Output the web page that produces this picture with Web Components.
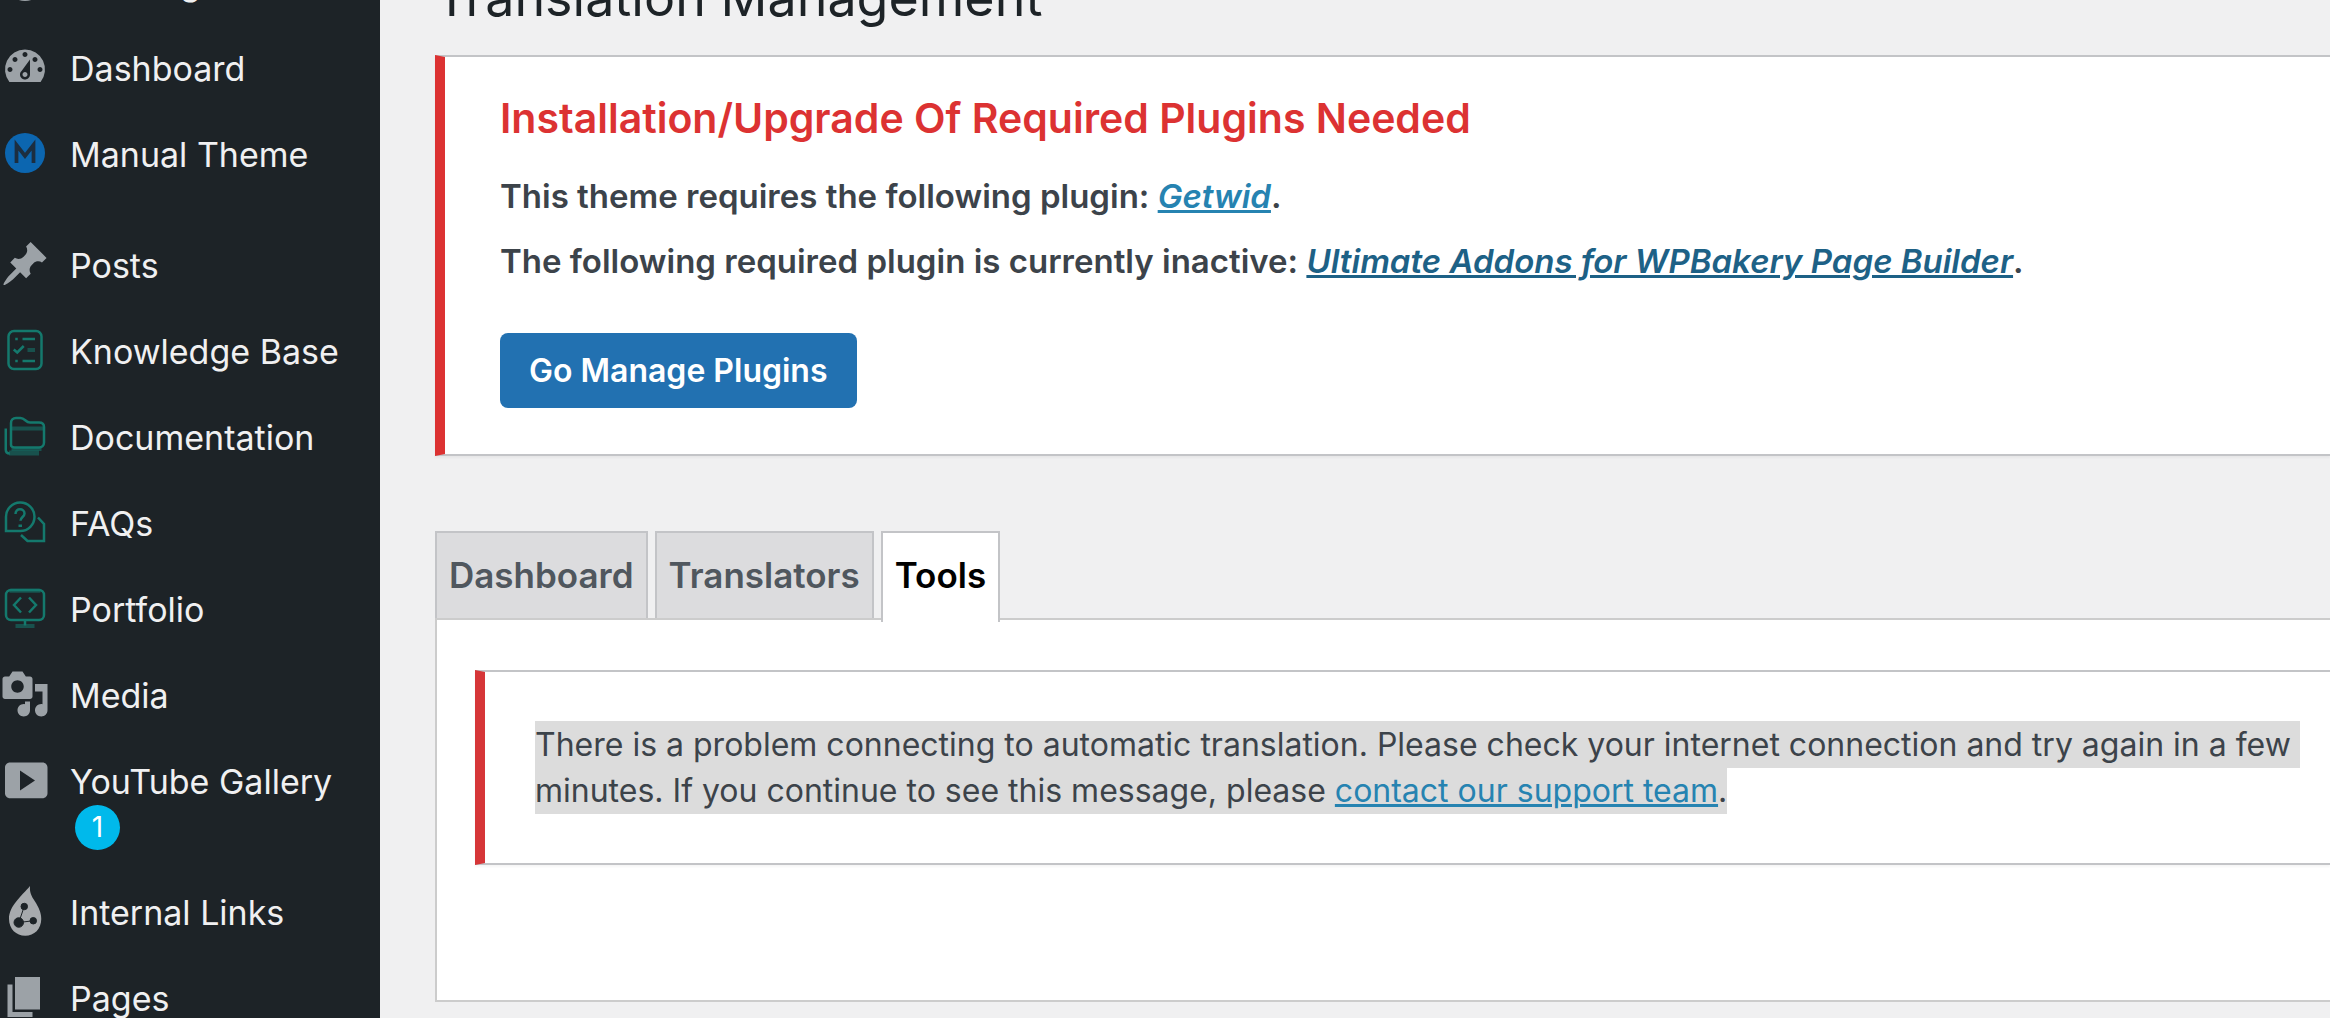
<!DOCTYPE html>
<html lang="en">
<head>
<meta charset="utf-8">
<title>Translation Management</title>
<style>
  body {
    margin: 0;
    background: #f0f0f1;
    font-family: Inter, "Liberation Sans", sans-serif;
    color: #3c434a;
  }
  a {
    color: #2683b1;
    text-decoration-thickness: 3px;
  }
  a.visited {
    color: #1d6186;
  }
</style>
</head>
<body>
<wp-admin>
  <admin-menu slot="menu">
    <menu-item icon="disc">Booking</menu-item>
    <menu-item icon="dashboard">Dashboard</menu-item>
    <menu-item icon="manual">Manual Theme</menu-item>
    <menu-separator></menu-separator>
    <menu-item icon="pin">Posts</menu-item>
    <menu-item icon="checklist">Knowledge Base</menu-item>
    <menu-item icon="folders">Documentation</menu-item>
    <menu-item icon="faq">FAQs</menu-item>
    <menu-item icon="monitor">Portfolio</menu-item>
    <menu-item icon="media">Media</menu-item>
    <menu-item icon="video" count="1">YouTube Gallery</menu-item>
    <menu-item icon="drop">Internal Links</menu-item>
    <menu-item icon="pages">Pages</menu-item>
  </admin-menu>

  <page-title>Translation Management</page-title>
  <admin-notice strong>
    <span slot="title">Installation/Upgrade Of Required Plugins Needed</span>
    <notice-line>This theme requires the following plugin: <a href="#getwid"><em>Getwid</em></a>.</notice-line>
    <notice-line>The following required plugin is currently inactive: <a class="visited" href="#ultimate-addons"><em>Ultimate Addons for WPBakery Page Builder</em></a>.</notice-line>
    <action-button slot="action">Go Manage Plugins</action-button>
  </admin-notice>
  <tab-panel tabs="Dashboard,Translators,Tools" selected="Tools">
    <admin-notice>
      <selected-text>There is a problem connecting to automatic translation. Please check your internet connection and try again in a few minutes. If you continue to see this message, please <a href="#support">contact our support team</a>.</selected-text>
    </admin-notice>
  </tab-panel>
</wp-admin>

<script>
const ICONS = {
  disc: '<circle cx="10" cy="10" r="8"/>',
  dashboard: '<path d="M3.76 16h12.48A7.998 7.998 0 0 0 10 3a7.998 7.998 0 0 0-6.24 13zM10 4c.55 0 1 .45 1 1s-.45 1-1 1-1-.45-1-1 .45-1 1-1zM6 6c.55 0 1 .45 1 1s-.45 1-1 1-1-.45-1-1 .45-1 1-1zm8 0c.55 0 1 .45 1 1s-.45 1-1 1-1-.45-1-1 .45-1 1-1zm-5.37 5.55L12 7v6c0 1.1-.9 2-2 2s-2-.9-2-2c0-.57.24-1.08.63-1.45zM4 10c.55 0 1 .45 1 1s-.45 1-1 1-1-.45-1-1 .45-1 1-1zm12 0c.55 0 1 .45 1 1s-.45 1-1 1-1-.45-1-1 .45-1 1-1zm-5 3c0-.55-.45-1-1-1s-1 .45-1 1 .45 1 1 1 1-.45 1-1z"/>',
  manual: '<circle cx="10" cy="10" r="8" fill="#0c66b0"/><path d="M6.6 14V6.8L10 11.2l3.4-4.4V14" fill="none" stroke="#1c2e40" stroke-width="1.5"/>',
  pin: '<path d="M10.44 3.02l1.82-1.82 6.36 6.35-1.83 1.82c-1.05-.68-2.48-.57-3.41.36l-.75.75c-.92.93-1.04 2.35-.35 3.41l-1.83 1.82-2.41-2.41-2.8 2.79c-.42.42-3.38 2.71-3.8 2.29s1.86-3.39 2.28-3.81l2.79-2.79L4.1 9.36l1.83-1.82c1.05.69 2.48.57 3.4-.36l.75-.75c.93-.92 1.05-2.35.36-3.41z"/>',
  checklist: '<g class="line"><rect x="3.4" y="2.4" width="13.2" height="15.2" rx="2.2"/><path d="M6.1 5.6h1M9 5.6h5M6.1 14.4h1M9 14.4h5M5.5 9.8l1.4 1.2 2.6-2.6"/><path d="M11 10h3" stroke-width="1.6" opacity=".55"/></g>',
  folders: '<g class="line"><path d="M4.4 13.6V4.8c0-1.2.8-2 2-2h1.8c1.8 0 2 1.8 3.8 1.8h3.6c1.2 0 2 .6 2 1.8v6.200c0 1.200-.8 2-2 2H6.400c-1.200 0-2-.4-2-1zM2.300 7v8.400c0 1 .6 1.600 1.600 1.600"/><path d="M4.400 7h13.200M4.600 15.200h12" stroke-width="1.600" opacity=".55"/><path d="M3.600 16.800h12" stroke-width="2" opacity=".55"/></g>',
  faq: '<g class="line"><path d="M2.4 13.6V8a5.7 5.7 0 1 1 5.7 5.6zM15.2 8.2l2.4 2.6v6.8H11l-2.6-2.4"/><path d="M6.2 6.8c0-2.6 3.6-2.4 3.6-.2 0 1.4-1.6 1.4-1.6 2.9M7.4 11.5h1.4"/></g>',
  monitor: '<g class="line"><rect x="2.4" y="2.8" width="15.2" height="12" rx="2"/><path d="M8.4 5.8L5.6 8.8l2.8 3M11.6 5.8l2.8 3-2.8 3M10 15v2"/><path d="M6.2 17.2h7.6M3.8 3.1h12.4" stroke-width="1.6" opacity=".55"/></g>',
  media: '<path d="M13 11V4c0-.55-.45-1-1-1h-1.67L9 1H5L3.67 3H2c-.55 0-1 .45-1 1v7c0 .55.45 1 1 1h10c.55 0 1-.45 1-1zM7 4.5c1.38 0 2.5 1.12 2.5 2.5S8.38 9.5 7 9.5 4.5 8.38 4.5 7 5.62 4.5 7 4.5zM14 6h5v10.5c0 1.38-1.12 2.5-2.5 2.5S14 17.88 14 16.5s1.12-2.5 2.5-2.5c.17 0 .34.02.5.05V9h-3V6zm-4 8.05V13h2v3.5c0 1.38-1.12 2.5-2.5 2.5S7 17.88 7 16.5 8.12 14 9.5 14c.17 0 .34.02.5.05z"/>',
  video: '<path fill-rule="evenodd" d="M4 3h13c1.1 0 2 .9 2 2v10.3c0 1.1-.9 2-2 2H4c-1.1 0-2-.9-2-2V5c0-1.1.9-2 2-2zm4 3.2v8l6-4z"/>',
  drop: '<path fill="#a7aaad" d="M12 0c-.2 2.4.4 3.8 2 6.2 1.4 2.2 2.5 4.4 2.5 7 0 4-2.8 6.7-6.4 6.7s-6.500-2.700-6.500-6.700C3.600 8 8.600 4 12 0z"/><g fill="#1d2327" stroke="#1d2327" stroke-width=".4"><circle cx="9.7" cy="8.2" r="1.3"/><circle cx="7.5" cy="14.6" r="1.9"/><circle cx="13.3" cy="13.9" r="1.3"/><path d="M9.7 8.2L7.5 14.6l5.8-.7" fill="none"/></g>',
  pages: '<path d="M6 15V2h10v13H6zm-1 1h8v2H3V5h2v11z"/>'
};

class WpAdmin extends HTMLElement {
  constructor() {
    super();
    this.attachShadow({ mode: 'open' });
    this.shadowRoot.innerHTML = `
      <style>
        :host {
          display: flex;
          height: 100vh;
          overflow: hidden;
        }
        nav {
          flex: none;
          width: 380px;
          background: #1d2327;
          overflow: hidden;
        }
        main {
          flex: 1;
          min-width: 0;
          padding-left: 55px;
        }
      </style>
      <nav aria-label="Main menu"><slot name="menu"></slot></nav>
      <main><slot></slot></main>
    `;
  }
}

class AdminMenu extends HTMLElement {
  constructor() {
    super();
    this.attachShadow({ mode: 'open' });
    this.shadowRoot.innerHTML = `
      <style>
        :host {
          display: flex;
          flex-direction: column;
          margin-top: -61px;
        }
      </style>
      <slot></slot>
    `;
  }
}

class MenuItem extends HTMLElement {
  constructor() {
    super();
    this.attachShadow({ mode: 'open' });
  }

  connectedCallback() {
    const count = this.getAttribute('count');
    this.shadowRoot.innerHTML = `
      <style>
        :host {
          display: block;
        }
        a {
          display: flex;
          gap: 20px;
          padding: 17px 0 19px;
          color: #f0f0f1;
          font-size: 34px;
          line-height: 46px;
          text-decoration: none;
        }
        svg {
          flex: none;
          width: 50px;
          height: 50px;
          fill: #9ca2a7;
        }
        .line {
          fill: none;
          stroke: #14796d;
          stroke-width: 1;
        }
        .label {
          padding-top: 4px;
        }
        .count {
          display: block;
          width: 45px;
          margin-left: 5px;
          border-radius: 50%;
          background: #00b9eb;
          color: #fff;
          font-size: 28px;
          line-height: 45px;
          text-align: center;
        }
      </style>
      <a href="#">
        <svg viewBox="0 0 20 20" aria-hidden="true">${ICONS[this.getAttribute('icon')]}</svg>
        <span class="label"><slot></slot>${count ? `<span class="count">${count}</span>` : ''}</span>
      </a>
    `;
  }
}

class MenuSeparator extends HTMLElement {
  constructor() {
    super();
    this.attachShadow({ mode: 'open' });
    this.shadowRoot.innerHTML = `
      <style>
        :host {
          display: block;
          height: 25px;
        }
      </style>
    `;
  }
}

class PageTitle extends HTMLElement {
  constructor() {
    super();
    this.attachShadow({ mode: 'open' });
    this.shadowRoot.innerHTML = `
      <style>
        :host {
          display: block;
          margin-top: -40px;
        }
        h1 {
          margin: 0;
          padding-bottom: 20px;
          color: #1d2327;
          font-size: 52px;
          font-weight: 400;
          line-height: 75px;
        }
      </style>
      <h1><slot></slot></h1>
    `;
  }
}

class AdminNotice extends HTMLElement {
  constructor() {
    super();
    this.attachShadow({ mode: 'open' });
    this.shadowRoot.innerHTML = `
      <style>
        :host {
          display: block;
          border: 2px solid #c3c4c7;
          border-left: 10px solid #d63638;
          border-right: 0;
          background: #fff;
          box-shadow: 0 2px 2px rgba(0, 0, 0, .04);
          padding: 50px 0 49px 50px;
          font-size: 32px;
          line-height: 46px;
        }
        :host([strong]) {
          border-left-color: #dc3232;
          padding: 31px 0 46px 55px;
          font-weight: 600;
        }
        h2 {
          margin: 0 0 25px;
          color: #dc3232;
          font-size: 41px;
          font-weight: 600;
          line-height: 60px;
        }
        :host(:not([strong])) h2 {
          display: none;
        }
      </style>
      <h2><slot name="title"></slot></h2>
      <slot></slot>
      <slot name="action"></slot>
    `;
  }
}

class NoticeLine extends HTMLElement {
  constructor() {
    super();
    this.attachShadow({ mode: 'open' });
    this.shadowRoot.innerHTML = `
      <style>
        :host {
          display: block;
          margin-bottom: 19px;
        }
        p {
          margin: 0;
          font-size: 33px;
        }
      </style>
      <p><slot></slot></p>
    `;
  }
}

class ActionButton extends HTMLElement {
  constructor() {
    super();
    this.attachShadow({ mode: 'open' });
    this.shadowRoot.innerHTML = `
      <style>
        :host {
          display: block;
          margin-top: 49px;
        }
        button {
          display: block;
          border: 0;
          border-radius: 8px;
          padding: 0 29px;
          background: #2271b1;
          color: #fff;
          font: inherit;
          line-height: 75px;
          cursor: pointer;
        }
      </style>
      <button type="button"><slot></slot></button>
    `;
  }
}

class TabPanel extends HTMLElement {
  constructor() {
    super();
    this.attachShadow({ mode: 'open' });
  }

  connectedCallback() {
    const selected = this.getAttribute('selected');
    const tabs = this.getAttribute('tabs').split(',');
    this.shadowRoot.innerHTML = `
      <style>
        :host {
          display: block;
          margin-top: 75px;
        }
        .tabs {
          display: flex;
          gap: 7px;
        }
        button {
          border: 2px solid #c3c4c7;
          border-bottom: 0;
          padding: 20px 12px;
          background: #dcdcde;
          color: #50575e;
          font: inherit;
          font-size: 35px;
          font-weight: 600;
          line-height: 45px;
          cursor: pointer;
        }
        /* the selected tab runs over the panel's top border */
        button[aria-selected="true"] {
          position: relative;
          margin-bottom: -4px;
          padding-bottom: 24px;
          background: #fff;
          color: #000;
        }
        .panel {
          border: 2px solid #ccc;
          border-right: 0;
          padding: 50px 0 135px 38px;
          background: #fff;
        }
      </style>
      <div class="tabs" role="tablist">
        ${tabs.map(tab => `<button type="button" role="tab" aria-selected="${tab === selected}">${tab}</button>`).join('')}
      </div>
      <div class="panel" role="tabpanel"><slot></slot></div>
    `;
  }
}

class SelectedText extends HTMLElement {
  constructor() {
    super();
    this.attachShadow({ mode: 'open' });
    // break-spaces keeps the space at the end of a line inside the highlight
    this.shadowRoot.innerHTML = `
      <style>
        :host {
          display: block;
        }
        p {
          margin: 0;
          white-space: break-spaces;
        }
        span {
          padding: 4px 0;
          background: #dcdcdc;
        }
      </style>
      <p><span><slot></slot></span></p>
    `;
  }
}

customElements.define('wp-admin', WpAdmin);
customElements.define('admin-menu', AdminMenu);
customElements.define('menu-item', MenuItem);
customElements.define('menu-separator', MenuSeparator);
customElements.define('page-title', PageTitle);
customElements.define('admin-notice', AdminNotice);
customElements.define('notice-line', NoticeLine);
customElements.define('action-button', ActionButton);
customElements.define('tab-panel', TabPanel);
customElements.define('selected-text', SelectedText);
</script>
</body>
</html>
